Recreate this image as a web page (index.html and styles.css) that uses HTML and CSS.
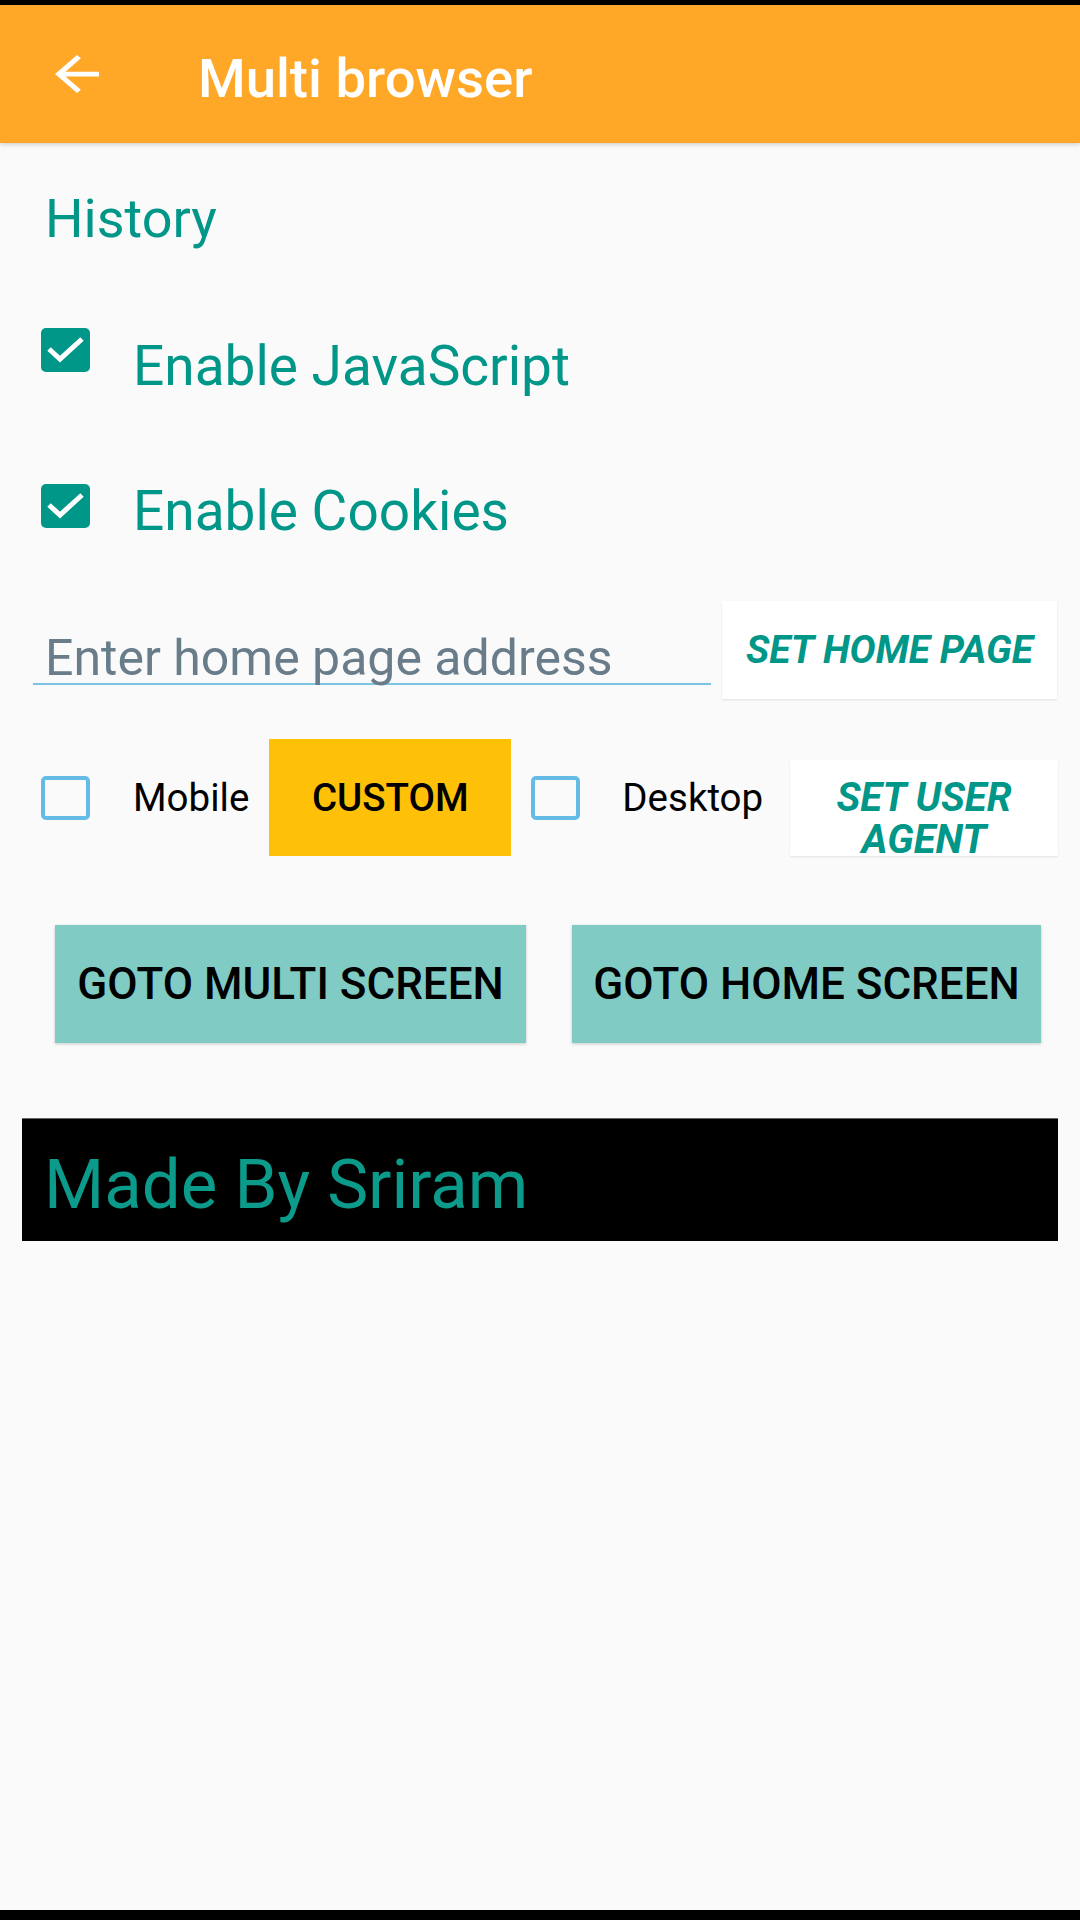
FILE: index.html
```html
<!DOCTYPE html>
<html lang="en">
<head>
  <meta charset="UTF-8" />
  <meta name="viewport" content="width=device-width, initial-scale=1.0" />
  <title>Multi browser</title>
  <link rel="stylesheet" href="styles.css">
</head>
<body>
  <div class="status"></div>

  <header class="toolbar">
    <button class="back" aria-label="Back">
      <svg width="44" height="38" viewBox="4 4 16 16" preserveAspectRatio="none">
        <path d="M20 11H7.83l5.59-5.59L12 4l-8 8 8 8 1.41-1.41L7.83 13H20v-2z" fill="#fff"/>
      </svg>
    </button>
    <h1>Multi browser</h1>
  </header>

  <main class="settings">
    <div class="history">History</div>

    <label class="check-row first">
      <span class="box checked">
        <svg width="49" height="44" viewBox="0 0 49 44"><polyline points="8,21 19,31 41,11" fill="none" stroke="#fff" stroke-width="5"/></svg>
      </span>
      <span class="check-label">Enable JavaScript</span>
    </label>

    <label class="check-row second">
      <span class="box checked">
        <svg width="49" height="44" viewBox="0 0 49 44"><polyline points="8,21 19,31 41,11" fill="none" stroke="#fff" stroke-width="5"/></svg>
      </span>
      <span class="check-label">Enable Cookies</span>
    </label>

    <div class="home-row">
      <div class="field">Enter home page address</div>
      <button class="flat-btn home-btn">SET HOME PAGE</button>
    </div>

    <div class="agent-row">
      <label class="small-check"><span class="box"></span><span>Mobile</span></label>
      <button class="custom-btn">CUSTOM</button>
      <label class="small-check desktop"><span class="box"></span><span>Desktop</span></label>
      <button class="flat-btn agent-btn">SET USER<br>AGENT</button>
    </div>

    <div class="goto-row">
      <button class="goto-btn multi">GOTO MULTI SCREEN</button>
      <button class="goto-btn home">GOTO HOME SCREEN</button>
    </div>

    <div class="credit">Made By Sriram</div>
  </main>

  <div class="navbar"></div>
</body>
</html>
```

FILE: styles.css
```css
html, body {
  margin: 0;
  padding: 0;
}
body {
  width: 1080px;
  height: 1920px;
  display: flex;
  flex-direction: column;
  background: #fafafa;
  font-family: Roboto, "Liberation Sans", sans-serif;
  overflow: hidden;
}
button {
  font-family: inherit;
  border: none;
  margin: 0;
  padding: 0;
  cursor: pointer;
}
.status {
  height: 5px;
  background: #000;
}
.navbar {
  height: 10px;
  background: #000;
}

/* toolbar */
.toolbar {
  height: 138px;
  background: #ffa726;
  display: flex;
  align-items: center;
  box-shadow: 0 2px 4px rgba(0, 0, 0, 0.15);
  position: relative;
  z-index: 1;
}
.back {
  background: none;
  width: 44px;
  height: 38px;
  margin-left: 55px;
  display: flex;
}
.toolbar h1 {
  margin: 0 0 0 99px;
  padding-top: 8px;
  font-size: 54.5px;
  font-weight: 500;
  line-height: 1;
  color: #fff;
}

/* content */
.settings {
  flex: 1;
  display: flex;
  flex-direction: column;
}
.history {
  margin: 49px 0 0 45px;
  font-size: 54px;
  line-height: 1;
  color: #009688;
}
.check-row {
  display: flex;
  align-items: flex-start;
  margin-left: 41px;
  color: #009688;
  font-size: 55px;
  line-height: 1;
}
.check-row.first {
  margin-top: 82px;
}
.check-row.first .check-label {
  margin-top: 11px;
}
.check-row.second {
  margin-top: 90px;
}
.check-label {
  margin-left: 43px;
}
.box {
  width: 49px;
  height: 44px;
  border-radius: 5px;
  box-sizing: border-box;
  border: 4px solid #64bbe6;
  flex-shrink: 0;
}
.box.checked {
  background: #009688;
  border: none;
}
.box svg {
  display: block;
}

/* home page row */
.home-row {
  display: flex;
  align-items: flex-start;
  margin: 62px 22px 0 33px;
}
.field {
  width: 666px;
  margin-top: 32px;
  padding-left: 12px;
  font-size: 50px;
  line-height: 1;
  color: #687c8a;
  border-bottom: 2px solid #7cc3e4;
}
.flat-btn {
  background: #fff;
  color: #009688;
  font-weight: 700;
  font-style: italic;
  box-shadow: 0 1px 2px rgba(0, 0, 0, 0.1);
}
.home-btn {
  margin-left: 11px;
  width: 335px;
  height: 98px;
  font-size: 39px;
}

/* user agent row */
.agent-row {
  display: flex;
  align-items: center;
  height: 117px;
  margin: 40px 22px 0 41px;
}
.small-check {
  display: flex;
  align-items: center;
  font-size: 38.5px;
  color: #000;
}
.small-check span + span {
  margin-left: 43px;
}
.small-check.desktop {
  margin-left: 20px;
}
.small-check.desktop span + span {
  margin-left: 42px;
}
.custom-btn {
  margin-left: 20px;
  width: 242px;
  height: 117px;
  background: #ffc107;
  color: #000;
  font-size: 38.5px;
  font-weight: 500;
}
.agent-btn {
  align-self: flex-end;
  margin-left: auto;
  width: 268px;
  height: 96px;
  box-sizing: border-box;
  padding-top: 17px;
  overflow: hidden;
  font-size: 40px;
  line-height: 42px;
  display: block;
  text-align: center;
}

/* navigation */
.goto-row {
  display: flex;
  gap: 46px;
  margin: 69px 0 0 55px;
}
.goto-btn {
  height: 118px;
  background: #80cbc4;
  color: #000;
  font-size: 44px;
  font-weight: 500;
  box-shadow: 0 1px 3px rgba(0, 0, 0, 0.2);
}
.goto-btn.multi {
  width: 471px;
}
.goto-btn.home {
  width: 469px;
}

.credit {
  margin: 75px 22px 0 22px;
  height: 123px;
  box-sizing: border-box;
  padding: 31px 0 0 22px;
  background: #000;
  border-top: 1px solid #666;
  color: #0c9b8b;
  font-size: 69px;
  line-height: 1;
}
```
